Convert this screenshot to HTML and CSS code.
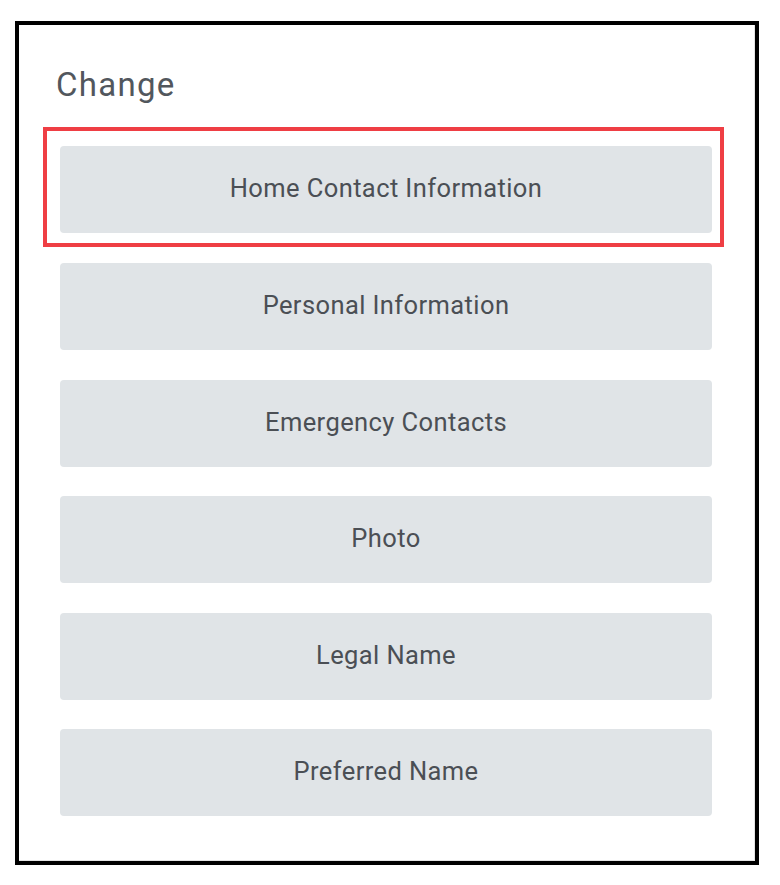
FILE: index.html
```html
<!DOCTYPE html>
<html>
<head>
<meta charset="utf-8">
<link rel="stylesheet" href="styles.css">
</head>
<body>
<div class="panel">
  <div class="card">
    <h1 class="title">Change</h1>
    <div class="list">
      <div class="highlight">
        <button class="btn"><span>Home Contact Information</span></button>
      </div>
      <button class="btn plain"><span>Personal Information</span></button>
      <button class="btn plain"><span>Emergency Contacts</span></button>
      <button class="btn plain"><span>Photo</span></button>
      <button class="btn plain"><span>Legal Name</span></button>
      <button class="btn plain"><span>Preferred Name</span></button>
    </div>
  </div>
</div>
</body>
</html>
```
FILE: styles.css
```css
html, body {
  margin: 0;
  padding: 0;
  background: #ffffff;
}
body {
  font-family: Roboto, "Liberation Sans", sans-serif;
  padding: 21px 0 0 15px;
}
.panel {
  box-sizing: border-box;
  width: 744px;
  height: 844px;
  border: 4px solid #000000;
  background: #ffffff;
}
.card {
  box-sizing: border-box;
  height: 100%;
  border-right: 1px solid #e4e4e4;
  border-bottom: 1px solid #e4e4e4;
  padding-top: 40px;
}
.title {
  margin: 0 0 22px 37px;
  font-size: 33px;
  line-height: 40px;
  font-weight: 400;
  color: #52575d;
  letter-spacing: 1.3px;
}
.list {
  display: flex;
  flex-direction: column;
  gap: 29.5px;
  padding: 0 30px 0 24px;
}
.highlight {
  border: 4px solid #ef3e44;
  padding: 15px 8px 10px 13px;
  margin-bottom: -13.5px;
}
.btn {
  display: flex;
  align-items: center;
  justify-content: center;
  width: 100%;
  height: 87px;
  border: none;
  border-radius: 4px;
  background: #e0e4e7;
  font-family: Roboto, "Liberation Sans", sans-serif;
  font-size: 25.5px;
  color: #4b4f55;
  letter-spacing: 0.4px;
  padding: 0;
}
.btn span {
  margin-top: -3px;
}
.plain {
  margin: 0 12px 0 17px;
  width: auto;
}
```
